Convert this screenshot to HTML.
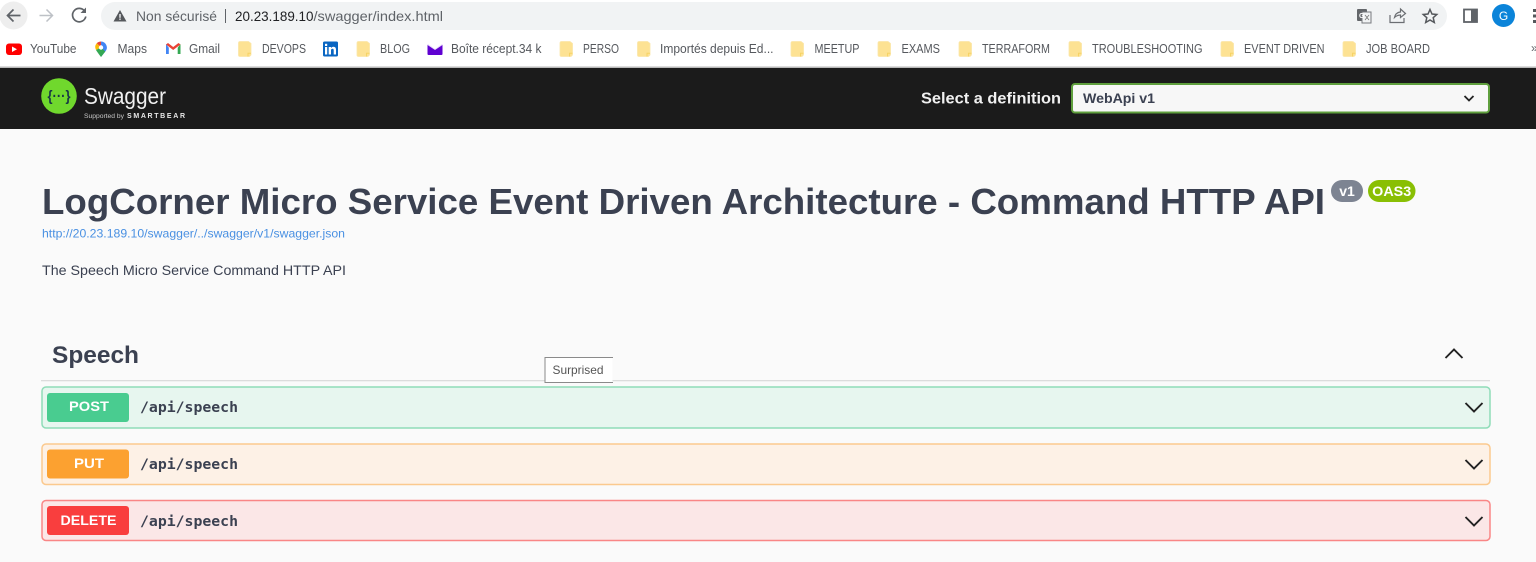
<!DOCTYPE html>
<html lang="fr">
<head>
<meta charset="utf-8">
<title>Swagger UI</title>
<style>
html,body{margin:0;padding:0;width:1536px;height:562px;overflow:hidden;background:#fafafa}
svg{display:block;filter:blur(.35px)}
text{font-family:"Liberation Sans",sans-serif}
.bm{font-size:13px;fill:#55585d}
.mono{font-family:"DejaVu Sans Mono","Liberation Mono",monospace;font-weight:700;font-size:14px;fill:#3b4151}
.method{font-size:14px;font-weight:700;fill:#fff;text-anchor:middle}
</style>
</head>
<body>
<svg width="1536" height="562" viewBox="0 0 1536 562" xmlns="http://www.w3.org/2000/svg">
<defs>
<g id="folder">
<path d="M1.5 0H10L12.5 2V13.5L11 15H1.5Q0 15 0 13.5V1.5Q0 0 1.5 0Z" fill="#fde293" stroke="#fbe6a8" stroke-width=".8"/>
<path d="M9.5 15V11.8H12.5" fill="none" stroke="#f6d365" stroke-width="1"/>
</g>
<path id="chev" d="M0 0L8.5 8.5L17 0" fill="none" stroke="#222" stroke-width="1.9"/>
</defs>

<!-- chrome -->
<rect width="1536" height="67" fill="#fff"/>
<rect y="66.5" width="1536" height="1.5" fill="#b9b9b9"/>
<circle cx="13.500" cy="15.500" r="14" fill="#eeeeee"/>
<path d="M20.500 15.500H8M13.500 9.500L7.500 15.500L13.500 21.500" fill="none" stroke="#5f6368" stroke-width="1.700"/>
<path d="M39.500 15.500H52M46.500 9.500L52.500 15.500L46.500 21.500" fill="none" stroke="#bdc1c6" stroke-width="1.500"/>
<path d="M84.700 11.200A6.700 6.700 0 1 0 85.800 16.500" fill="none" stroke="#5f6368" stroke-width="1.700"/>
<path d="M86 7.500V13H80.500Z" fill="#5f6368"/>

<rect x="101" y="2" width="1346" height="28" rx="14" fill="#f1f3f4"/>
<path d="M120 10L126.500 21.500H113.500Z" fill="#55585c"/>
<rect x="119.300" y="14" width="1.400" height="3.800" fill="#f1f3f4"/>
<rect x="119.300" y="18.500" width="1.400" height="1.400" fill="#f1f3f4"/>
<text x="136" y="21" font-size="14" fill="#5f6368" textLength="81" lengthAdjust="spacingAndGlyphs">Non sécurisé</text>
<rect x="225" y="9" width="1" height="14" fill="#5f6368"/>
<text x="235" y="21" font-size="14" fill="#202124" textLength="78.500" lengthAdjust="spacingAndGlyphs">20.23.189.10</text>
<text x="313.500" y="21" font-size="14" fill="#5f6368" textLength="129.500" lengthAdjust="spacingAndGlyphs">/swagger/index.html</text>

<!-- toolbar right -->
<rect x="1357" y="9" width="10" height="12" rx="1" fill="#63666a"/>
<rect x="1362" y="12" width="9" height="11" fill="#f1f3f4" stroke="#777a7e" stroke-width="1"/>
<text x="1359" y="18" font-size="7" font-weight="700" fill="#fff">G</text>
<path d="M1365 15L1369 20M1369 15L1365 20" stroke="#777" stroke-width=".8"/>
<path d="M1390 15V22.500H1404V18M1394.500 17.500Q1395.500 12.500 1400.500 12V9L1405.500 13.500L1400.500 17.500V15Q1397 15 1394.500 17.500Z" fill="none" stroke="#6b6e72" stroke-width="1.200"/>
<path d="M1430 9.500L1432 14L1436.800 14.500L1433.200 17.700L1434.300 22.500L1430 20L1425.700 22.500L1426.800 17.700L1423.200 14.500L1428 14Z" fill="none" stroke="#55585c" stroke-width="1.500"/>
<rect x="1464" y="9.500" width="13" height="12.500" fill="none" stroke="#5f6368" stroke-width="1.800"/>
<rect x="1471" y="9.500" width="6" height="12.500" fill="#5f6368"/>
<circle cx="1503.500" cy="15.500" r="11.500" fill="#0b84d9"/>
<text x="1503.500" y="20" font-size="12" fill="#fff" text-anchor="middle">G</text>
<rect x="1533" y="9" width="3" height="3" fill="#55585c"/>
<rect x="1533" y="14.500" width="3" height="3" fill="#55585c"/>
<rect x="1533" y="20" width="3" height="3" fill="#55585c"/>

<!-- bookmarks -->
<rect x="6" y="43.500" width="16" height="11.500" rx="3" fill="#f00"/>
<path d="M12 46.500L17 49.200L12 52Z" fill="#fff"/>
<text class="bm" x="30" y="53" textLength="46.500" lengthAdjust="spacingAndGlyphs">YouTube</text>

<path d="M101 41.500A6 6 0 0 1 105.300 51.500L101 57Z" fill="#4285f4"/>
<path d="M101 41.500A6 6 0 0 0 96.700 43.300L101 47.500Z" fill="#ea4335"/>
<path d="M96.700 43.300A6 6 0 0 0 96 50L101 47.500Z" fill="#fbbc04"/>
<path d="M96 50Q97.500 52.500 101 57L105.300 51.500L101 47.500Z" fill="#34a853"/>
<circle cx="101" cy="47.500" r="2.200" fill="#fff"/>
<text class="bm" x="117.500" y="53" textLength="29.500" lengthAdjust="spacingAndGlyphs">Maps</text>

<path d="M166 44V54H168.800V47.800Z" fill="#4285f4"/>
<path d="M180.500 44V54H177.700V47.800Z" fill="#34a853"/>
<path d="M166 44.500L173.200 50L180.500 44.500L178.500 43L173.200 47L168 43Z" fill="#ea4335"/>
<text class="bm" x="189" y="53" textLength="31" lengthAdjust="spacingAndGlyphs">Gmail</text>

<use href="#folder" x="238.500" y="41.500"/>
<text class="bm" x="262" y="53" textLength="44" lengthAdjust="spacingAndGlyphs">DEVOPS</text>

<rect x="323" y="41.500" width="15" height="15" rx="1.500" fill="#0a66c2"/>
<rect x="325" y="47" width="2.200" height="7.500" fill="#fff"/>
<rect x="325" y="43.800" width="2.200" height="2.200" fill="#fff"/>
<path d="M328.700 54.500V47H331V48Q332 46.800 333.500 46.800Q336 46.800 336 49.800V54.500H333.700V50.300Q333.700 48.800 332.500 48.800Q331 48.800 331 50.500V54.500Z" fill="#fff"/>

<use href="#folder" x="357" y="41.500"/>
<text class="bm" x="380" y="53" textLength="30" lengthAdjust="spacingAndGlyphs">BLOG</text>

<rect x="427.500" y="44" width="15" height="11" rx="1" fill="#5f01d1"/>
<path d="M427.500 45L435 50L442.500 45V44H427.500Z" fill="#e9dcfb"/>
<path d="M428 44H442L435 49Z" fill="#fff"/>
<text class="bm" x="451" y="53" textLength="90.500" lengthAdjust="spacingAndGlyphs">Boîte récept.34 k</text>

<use href="#folder" x="560" y="41.500"/>
<text class="bm" x="583" y="53" textLength="36" lengthAdjust="spacingAndGlyphs">PERSO</text>
<use href="#folder" x="637.500" y="41.500"/>
<text class="bm" x="660" y="53" textLength="113.500" lengthAdjust="spacingAndGlyphs">Importés depuis Ed...</text>
<use href="#folder" x="791" y="41.500"/>
<text class="bm" x="814.500" y="53" textLength="45" lengthAdjust="spacingAndGlyphs">MEETUP</text>
<use href="#folder" x="878" y="41.500"/>
<text class="bm" x="901.500" y="53" textLength="38.500" lengthAdjust="spacingAndGlyphs">EXAMS</text>
<use href="#folder" x="959" y="41.500"/>
<text class="bm" x="982" y="53" textLength="68" lengthAdjust="spacingAndGlyphs">TERRAFORM</text>
<use href="#folder" x="1069" y="41.500"/>
<text class="bm" x="1092" y="53" textLength="110.500" lengthAdjust="spacingAndGlyphs">TROUBLESHOOTING</text>
<use href="#folder" x="1221" y="41.500"/>
<text class="bm" x="1244" y="53" textLength="80.500" lengthAdjust="spacingAndGlyphs">EVENT DRIVEN</text>
<use href="#folder" x="1343" y="41.500"/>
<text class="bm" x="1366" y="53" textLength="64" lengthAdjust="spacingAndGlyphs">JOB BOARD</text>
<text x="1531" y="52" font-size="12" fill="#5f6368">»</text>

<!-- swagger header -->
<rect y="68" width="1536" height="61" fill="#1b1b1b"/>
<circle cx="59" cy="96" r="17.800" fill="#70d82d"/>
<text x="59" y="101" font-size="15" font-weight="700" fill="#173646" text-anchor="middle" textLength="23" lengthAdjust="spacingAndGlyphs">{···}</text>
<text x="84" y="104" font-size="23" fill="#f0f0f0" textLength="82" lengthAdjust="spacingAndGlyphs">Swagger</text>
<text x="84" y="118" font-size="6" fill="#c8c8c8" textLength="40" lengthAdjust="spacingAndGlyphs">Supported by</text>
<text x="127" y="118" font-size="7" font-weight="700" fill="#e8e8e8" textLength="58" lengthAdjust="spacing">SMARTBEAR</text>
<text x="921" y="103.500" font-size="16" font-weight="700" fill="#f0f0f0" textLength="140" lengthAdjust="spacingAndGlyphs">Select a definition</text>
<rect x="1072" y="84" width="417" height="28.500" rx="3" fill="#f7f7f7" stroke="#5f9f3d" stroke-width="2"/>
<text x="1083" y="103" font-size="14" font-weight="700" fill="#3b4151" textLength="72" lengthAdjust="spacingAndGlyphs">WebApi v1</text>
<path d="M1464.500 96L1469 100.500L1473.500 96" fill="none" stroke="#222" stroke-width="1.800"/>

<!-- info -->
<text x="42" y="214" font-size="36" font-weight="700" fill="#3b4151" textLength="1283" lengthAdjust="spacingAndGlyphs">LogCorner Micro Service Event Driven Architecture - Command HTTP API</text>
<rect x="1331" y="180" width="32" height="22" rx="11" fill="#7d8492"/>
<text x="1347" y="196" font-size="14" font-weight="700" fill="#fff" text-anchor="middle">v1</text>
<rect x="1368" y="180" width="47.500" height="22" rx="11" fill="#89bf04"/>
<text x="1391.700" y="196" font-size="14" font-weight="700" fill="#fff" text-anchor="middle" textLength="39" lengthAdjust="spacingAndGlyphs">OAS3</text>
<text x="42" y="237.500" font-size="12" fill="#4990e2" textLength="303" lengthAdjust="spacingAndGlyphs">http://20.23.189.10/swagger/../swagger/v1/swagger.json</text>
<text x="42" y="275" font-size="14" fill="#3b4151" textLength="304" lengthAdjust="spacingAndGlyphs">The Speech Micro Service Command HTTP API</text>

<!-- tag -->
<text x="52" y="363" font-size="24" font-weight="700" fill="#3b4151" textLength="87" lengthAdjust="spacingAndGlyphs">Speech</text>
<path d="M1445.500 358L1454 349.500L1462.500 358" fill="none" stroke="#222" stroke-width="1.900"/>
<rect x="41" y="380" width="1449" height="1.300" fill="#dcdcdc"/>

<!-- tooltip -->
<rect x="544.500" y="357.500" width="68" height="25.500" fill="#fff"/>
<path d="M613 357.500H545V382.500H613" fill="none" stroke="#8a8a8a" stroke-width="1"/>
<text x="552.500" y="374" font-size="12" fill="#555" textLength="51" lengthAdjust="spacingAndGlyphs">Surprised</text>

<!-- POST -->
<rect x="42" y="387" width="1448" height="41" rx="4" fill="#e7f6ef" stroke="#8fdcb8" stroke-width="1.500"/>
<rect x="47" y="393" width="82" height="29" rx="3" fill="#49cc90"/>
<text class="method" x="89" y="411" textLength="40" lengthAdjust="spacingAndGlyphs">POST</text>
<text class="mono" x="140" y="412" textLength="98" lengthAdjust="spacingAndGlyphs">/api/speech</text>
<use href="#chev" x="1465.500" y="403"/>

<!-- PUT -->
<rect x="42" y="444" width="1448" height="40.500" rx="4" fill="#fdf1e6" stroke="#fbc98e" stroke-width="1.500"/>
<rect x="47" y="449.500" width="82" height="29" rx="3" fill="#fca130"/>
<text class="method" x="89" y="468" textLength="30" lengthAdjust="spacingAndGlyphs">PUT</text>
<text class="mono" x="140" y="469" textLength="98" lengthAdjust="spacingAndGlyphs">/api/speech</text>
<use href="#chev" x="1465.500" y="460"/>

<!-- DELETE -->
<rect x="42" y="500.500" width="1448" height="40" rx="4" fill="#fbe7e7" stroke="#f98686" stroke-width="1.500"/>
<rect x="47" y="506" width="82" height="29" rx="3" fill="#f93e3e"/>
<text class="method" x="88.500" y="525" textLength="56" lengthAdjust="spacingAndGlyphs">DELETE</text>
<text class="mono" x="140" y="526" textLength="98" lengthAdjust="spacingAndGlyphs">/api/speech</text>
<use href="#chev" x="1465.500" y="517"/>
</svg>
</body>
</html>
